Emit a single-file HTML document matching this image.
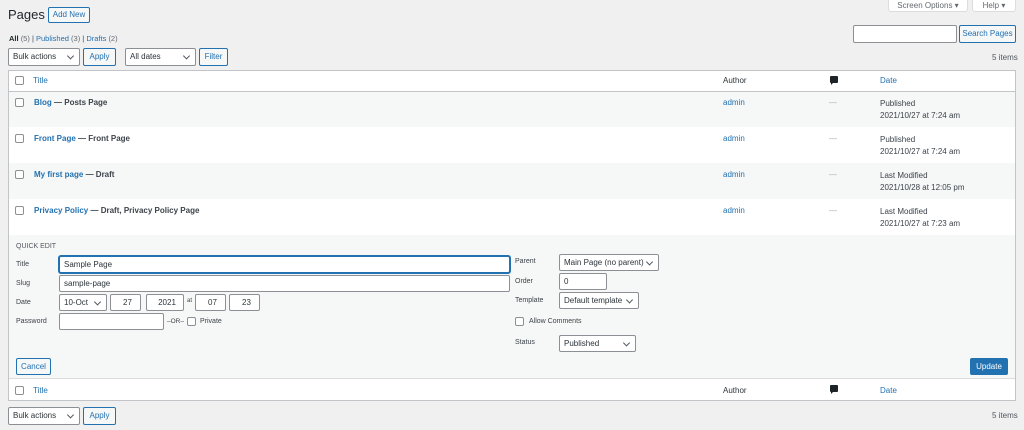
<!DOCTYPE html><html><head><style>
*{box-sizing:border-box;margin:0;padding:0}
body{width:1024px;height:430px;background:#f0f0f1;font-family:"Liberation Sans",sans-serif;font-size:8px;color:#3c434a;position:relative;overflow:hidden}
.a{position:absolute;white-space:nowrap}
.l{color:#2271b1}
.btn{position:absolute;border:1px solid #2271b1;color:#2271b1;background:#f6f7f7;border-radius:2px;font-size:8px;text-align:center}
.inp{position:absolute;border:1px solid #8c8f94;background:#fff;border-radius:2px;font-size:8px;padding-left:4px;color:#2c3338}
.sel:after{content:"";position:absolute;right:6px;top:50%;width:4px;height:4px;border-right:1px solid #50575e;border-bottom:1px solid #50575e;transform:translateY(-70%) rotate(45deg)}
.cb{position:absolute;width:9px;height:9px;border:1px solid #8c8f94;border-radius:2px;background:#fff}
.row{position:absolute;left:8px;width:1008px}
.bub{position:absolute;width:8px;height:7px;background:#1d2327;border-radius:1px}
.bub:after{content:"";position:absolute;left:1px;top:6px;border-left:3px solid #1d2327;border-bottom:3px solid transparent;height:0}
</style></head><body>
<div class="a" style="left:8px;top:7px;font-size:13px;color:#1d2327">Pages</div>
<div class="btn" style="left:48px;top:7px;width:42px;height:16px;line-height:14px;background:#f6f7f7">Add New</div>
<div class="a" style="left:888px;top:-4px;width:80px;height:16px;background:#fff;border:1px solid #dcdcde;border-radius:3px;text-align:center;line-height:13px;padding-top:2px;color:#646970">Screen Options ▾</div>
<div class="a" style="left:972px;top:-4px;width:44px;height:16px;background:#fff;border:1px solid #dcdcde;border-radius:3px;text-align:center;line-height:13px;padding-top:2px;color:#646970">Help ▾</div>
<div class="a" style="left:9px;top:34px;font-size:7.5px"><b style="color:#1d2327;font-weight:600">All</b> <span style="color:#646970">(5)</span> | <span class="l">Published</span> <span style="color:#646970">(3)</span> | <span class="l">Drafts</span> <span style="color:#646970">(2)</span></div>
<div class="inp" style="left:853px;top:25px;width:104px;height:18px"></div>
<div class="btn" style="left:959px;top:25px;width:57px;height:18px;line-height:16px">Search Pages</div>
<div class="inp sel" style="left:8px;top:48px;width:72px;height:18px;line-height:16px">Bulk actions</div>
<div class="btn" style="left:83px;top:48px;width:33px;height:18px;line-height:16px">Apply</div>
<div class="inp sel" style="left:125px;top:48px;width:71px;height:18px;line-height:16px">All dates</div>
<div class="btn" style="left:199px;top:48px;width:29px;height:18px;line-height:16px">Filter</div>
<div class="a" style="left:992px;top:53px;color:#50575e">5 items</div>
<div class="row" style="top:70px;height:331px;background:#fff;border:1px solid #c3c4c7"></div>
<div class="row" style="top:91px;height:1px;background:#c3c4c7"></div>
<div class="cb" style="left:15px;top:76px"></div><div class="a l" style="left:33px;top:76px">Title</div>
<div class="a" style="left:723px;top:76px;color:#2c3338">Author</div><div class="bub" style="left:830px;top:76px"></div><div class="a l" style="left:880px;top:76px">Date</div>
<div class="row" style="top:92px;height:35px;background:#f6f7f7;left:9px;width:1006px"></div>
<div class="row" style="top:163px;height:36px;background:#f6f7f7;left:9px;width:1006px"></div>
<div class="cb" style="left:15px;top:98px"></div><div class="a" style="left:34px;top:98px;font-weight:600"><span class="l">Blog</span> — Posts Page</div>
<div class="a l" style="left:723px;top:98px">admin</div><div class="a" style="left:829px;top:98px;color:#a7aaad">—</div>
<div class="a" style="left:880px;top:98px;line-height:12px">Published<br>2021/10/27 at 7:24 am</div>
<div class="cb" style="left:15px;top:134px"></div><div class="a" style="left:34px;top:134px;font-weight:600"><span class="l">Front Page</span> — Front Page</div>
<div class="a l" style="left:723px;top:134px">admin</div><div class="a" style="left:829px;top:134px;color:#a7aaad">—</div>
<div class="a" style="left:880px;top:134px;line-height:12px">Published<br>2021/10/27 at 7:24 am</div>
<div class="cb" style="left:15px;top:170px"></div><div class="a" style="left:34px;top:170px;font-weight:600"><span class="l">My first page</span> — Draft</div>
<div class="a l" style="left:723px;top:170px">admin</div><div class="a" style="left:829px;top:170px;color:#a7aaad">—</div>
<div class="a" style="left:880px;top:170px;line-height:12px">Last Modified<br>2021/10/28 at 12:05 pm</div>
<div class="cb" style="left:15px;top:206px"></div><div class="a" style="left:34px;top:206px;font-weight:600"><span class="l">Privacy Policy</span> — Draft, Privacy Policy Page</div>
<div class="a l" style="left:723px;top:206px">admin</div><div class="a" style="left:829px;top:206px;color:#a7aaad">—</div>
<div class="a" style="left:880px;top:206px;line-height:12px">Last Modified<br>2021/10/27 at 7:23 am</div>
<div class="row" style="top:235px;height:144px;background:#f6f7f7;left:9px;width:1006px;border-bottom:1px solid #dcdcde"></div>
<div class="a" style="left:16px;top:243px;font-size:7px;color:#50575e">QUICK EDIT</div>
<div class="a" style="left:16px;top:261px;font-size:7px">Title</div>
<div class="inp" style="left:59px;top:256px;width:451px;height:17px;line-height:15px;border-color:#2271b1;box-shadow:0 0 0 1px #2271b1">Sample Page</div>
<div class="a" style="left:16px;top:280px;font-size:7px">Slug</div>
<div class="inp" style="left:59px;top:275px;width:451px;height:17px;line-height:15px">sample-page</div>
<div class="a" style="left:16px;top:299px;font-size:7px">Date</div>
<div class="inp sel" style="left:59px;top:294px;width:48px;height:17px;line-height:15px">10-Oct</div>
<div class="inp" style="left:110px;top:294px;width:31px;height:17px;line-height:15px;text-align:center">27</div>
<div class="inp" style="left:146px;top:294px;width:38px;height:17px;line-height:15px;text-align:center">2021</div>
<div class="a" style="left:187px;top:298px;font-size:6px">at</div>
<div class="inp" style="left:195px;top:294px;width:31px;height:17px;line-height:15px;text-align:center">07</div>
<div class="inp" style="left:229px;top:294px;width:31px;height:17px;line-height:15px;text-align:center">23</div>
<div class="a" style="left:16px;top:318px;font-size:7px">Password</div>
<div class="inp" style="left:59px;top:313px;width:105px;height:17px"></div>
<div class="a" style="left:167px;top:318px;font-size:6.5px">–OR–</div><div class="cb" style="left:187px;top:317px"></div><div class="a" style="left:200px;top:318px;font-size:7px">Private</div>
<div class="btn" style="left:16px;top:358px;width:35px;height:17px;line-height:15px">Cancel</div>
<div class="a" style="left:515px;top:258px;font-size:7px">Parent</div>
<div class="inp sel" style="left:559px;top:254px;width:100px;height:17px;line-height:15px">Main Page (no parent)</div>
<div class="a" style="left:515px;top:278px;font-size:7px">Order</div>
<div class="inp" style="left:559px;top:273px;width:48px;height:17px;line-height:15px">0</div>
<div class="a" style="left:515px;top:297px;font-size:7px">Template</div>
<div class="inp sel" style="left:559px;top:292px;width:80px;height:17px;line-height:15px">Default template</div>
<div class="cb" style="left:515px;top:317px"></div><div class="a" style="left:529px;top:318px;font-size:7px">Allow Comments</div>
<div class="a" style="left:515px;top:339px;font-size:7px">Status</div>
<div class="inp sel" style="left:559px;top:335px;width:77px;height:17px;line-height:15px">Published</div>
<div class="a" style="left:970px;top:358px;width:38px;height:17px;background:#2271b1;color:#fff;border-radius:2px;text-align:center;line-height:17px">Update</div>
<div class="cb" style="left:15px;top:386px"></div><div class="a l" style="left:33px;top:386px">Title</div>
<div class="a" style="left:723px;top:386px;color:#2c3338">Author</div><div class="bub" style="left:830px;top:385px"></div><div class="a l" style="left:880px;top:386px">Date</div>
<div class="inp sel" style="left:8px;top:407px;width:72px;height:18px;line-height:16px">Bulk actions</div>
<div class="btn" style="left:83px;top:407px;width:33px;height:18px;line-height:16px">Apply</div>
<div class="a" style="left:992px;top:411px;color:#50575e">5 items</div>
</body></html>
